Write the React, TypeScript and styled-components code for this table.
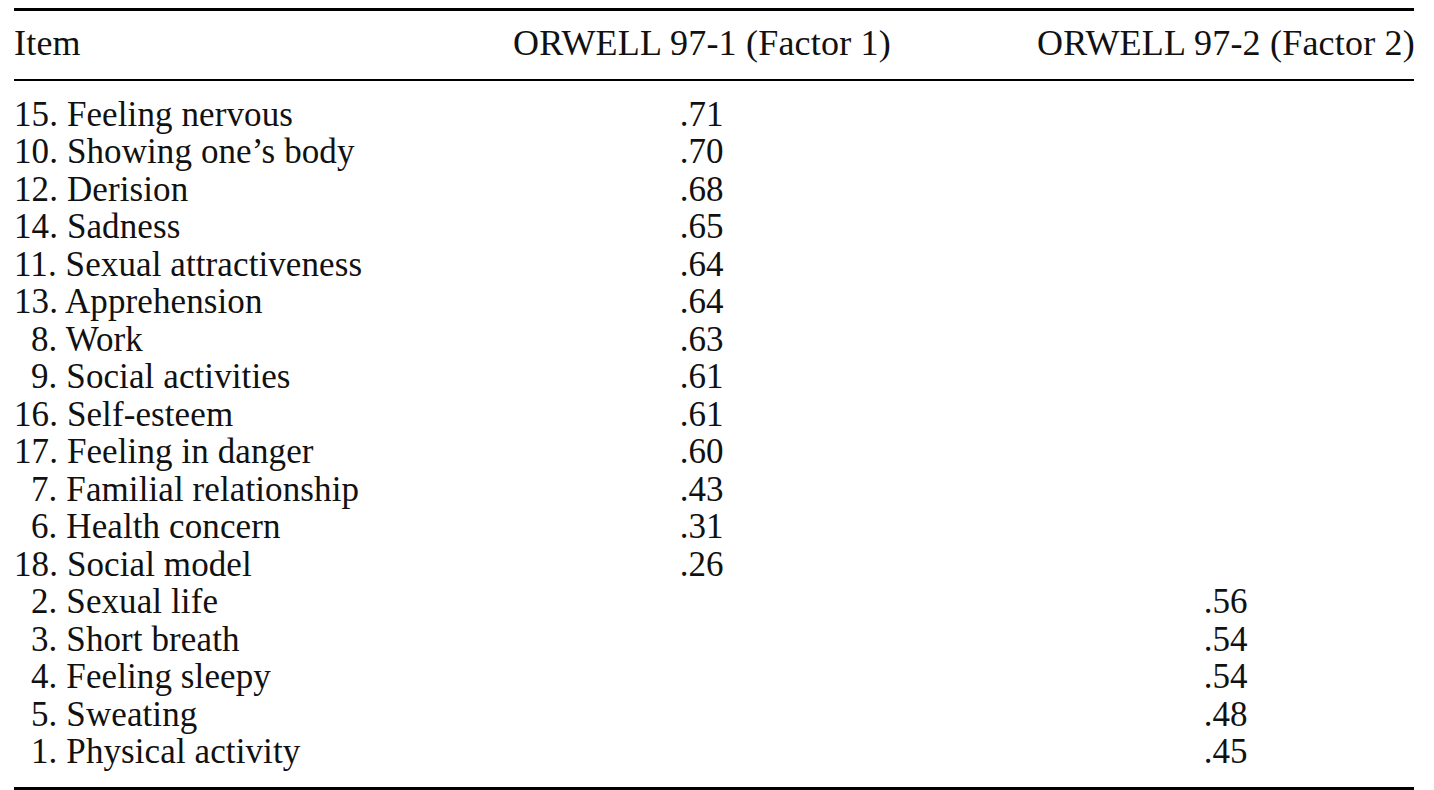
import React from 'react';
import styled, { createGlobalStyle } from 'styled-components';

const GlobalStyle = createGlobalStyle`
  html, body {
    margin: 0;
    padding: 0;
    background: #ffffff;
  }
  body {
    font-family: "Liberation Serif", "Times New Roman", serif;
    color: #111111;
  }
`;

const Page = styled.div`
  padding: 8px 0 0 14px;
`;

const Table = styled.div`
  width: 1400px;
  border-top: 3px solid #000;
  border-bottom: 3px solid #000;
`;

const Grid = styled.div`
  display: grid;
  grid-template-columns: 499px 377px 147px 377px;
  font-size: 35px;
  line-height: 37.5px;
  white-space: nowrap;
`;

const HeaderRow = styled(Grid)`
  font-size: 36px;
  padding: 14px 0 16px;
  border-bottom: 2px solid #000;
`;

const Body = styled.div`
  padding: 15px 0 16px;
`;

const Cell = styled.div<{ $align?: 'left' | 'center' | 'right'; $col: number }>`
  grid-column: ${p => p.$col};
  text-align: ${p => p.$align || 'left'};
`;

const HeadCell = styled(Cell)`
  letter-spacing: 0.2px;
`;

const ItemCell = styled(Cell)<{ $pad?: boolean }>`
  padding-left: ${p => (p.$pad ? '17px' : '0')};
  letter-spacing: 0.1px;
`;

type Row = { num: number; label: string; f1?: string; f2?: string };

const rows: Row[] = [
  { num: 15, label: 'Feeling nervous', f1: '.71' },
  { num: 10, label: 'Showing one\u2019s body', f1: '.70' },
  { num: 12, label: 'Derision', f1: '.68' },
  { num: 14, label: 'Sadness', f1: '.65' },
  { num: 11, label: 'Sexual attractiveness', f1: '.64' },
  { num: 13, label: 'Apprehension', f1: '.64' },
  { num: 8, label: 'Work', f1: '.63' },
  { num: 9, label: 'Social activities', f1: '.61' },
  { num: 16, label: 'Self-esteem', f1: '.61' },
  { num: 17, label: 'Feeling in danger', f1: '.60' },
  { num: 7, label: 'Familial relationship', f1: '.43' },
  { num: 6, label: 'Health concern', f1: '.31' },
  { num: 18, label: 'Social model', f1: '.26' },
  { num: 2, label: 'Sexual life', f2: '.56' },
  { num: 3, label: 'Short breath', f2: '.54' },
  { num: 4, label: 'Feeling sleepy', f2: '.54' },
  { num: 5, label: 'Sweating', f2: '.48' },
  { num: 1, label: 'Physical activity', f2: '.45' },
];

export default function App() {
  return (
    <Page>
      <GlobalStyle />
      <Table>
        <HeaderRow>
          <HeadCell $col={1}>Item</HeadCell>
          <HeadCell $col={2} $align="center">ORWELL 97-1 (Factor 1)</HeadCell>
          <HeadCell $col={4} $align="center">ORWELL 97-2 (Factor 2)</HeadCell>
        </HeaderRow>
        <Body>
          {rows.map(r => (
            <Grid key={r.num}>
              <ItemCell $col={1} $pad={r.num < 10}>
                {r.num}. {r.label}
              </ItemCell>
              <Cell $col={2} $align="center">{r.f1 ?? ''}</Cell>
              <Cell $col={4} $align="center">{r.f2 ?? ''}</Cell>
            </Grid>
          ))}
        </Body>
      </Table>
    </Page>
  );
}
